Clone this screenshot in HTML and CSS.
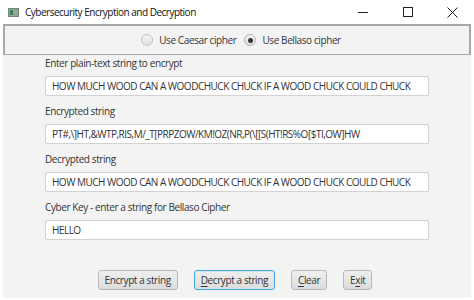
FILE: index.html
```html
<!DOCTYPE html>
<html lang="en">
<head>
    <meta charset="UTF-8">
    <meta name="viewport" content="width=device-width, initial-scale=1.0">
    <title>Cybersecurity Encryption and Decryption</title>
    <link rel="stylesheet" href="styles.css">
</head>
<body>
    <div id="window">
        <div id="titlebar">
            <div class="appicon"><span></span></div>
            <div class="title">Cybersecurity Encryption and Decryption</div>
            <div class="controls">
                <div class="ctl"><span class="min"></span></div>
                <div class="ctl"><span class="max"></span></div>
                <div class="ctl">
                    <svg width="11" height="11" viewBox="0 0 11 11"><path d="M0.5 0.5 L10.5 10.5 M10.5 0.5 L0.5 10.5" stroke="#222" stroke-width="1" fill="none"/></svg>
                </div>
            </div>
        </div>

        <div id="mode">
            <label class="radio"><span class="dot"></span>Use Caesar cipher</label>
            <label class="radio on"><span class="dot"></span>Use Bellaso cipher</label>
        </div>

        <div id="form">
            <div class="group">
                <div class="lbl">Enter plain-text string to encrypt</div>
                <div class="field">HOW MUCH WOOD CAN A WOODCHUCK CHUCK IF A WOOD CHUCK COULD CHUCK</div>
            </div>
            <div class="group">
                <div class="lbl">Encrypted string</div>
                <div class="field">PT#,\]HT,&amp;WTP,RIS,M/_T[PRPZOW/KM!OZ(NR,P(\[[S(HT!RS%O[$TI,OW]HW</div>
            </div>
            <div class="group">
                <div class="lbl">Decrypted string</div>
                <div class="field">HOW MUCH WOOD CAN A WOODCHUCK CHUCK IF A WOOD CHUCK COULD CHUCK</div>
            </div>
            <div class="group">
                <div class="lbl">Cyber Key - enter a string for Bellaso Cipher</div>
                <div class="field">HELLO</div>
            </div>
        </div>

        <div id="buttons">
            <div class="btn">Encrypt a string</div>
            <div class="btn focus"><u>D</u>ecrypt a string</div>
            <div class="btn"><u>C</u>lear</div>
            <div class="btn">E<u>x</u>it</div>
        </div>
    </div>
</body>
</html>
```

FILE: styles.css
```css
* {
    margin: 0;
    padding: 0;
    box-sizing: border-box;
    font-family: "Open Sans", "Noto Sans", sans-serif;
}
html,body {
    width: 100%;
    height: 100%;
    background-color: #fff;
    overflow: hidden;
}
#window {
    width: 474px;
    height: 300px;
    display: flex;
    flex-direction: column;
}
#titlebar {
    height: 24px;
    display: flex;
    align-items: center;
    background-color: #fff;
}
.appicon {
    width: 11px;
    height: 9px;
    margin: 0 6px 0 8px;
    background-color: #8fa79a;
    border: 1px solid #6f8878;
    position: relative;
}
.appicon span {
    position: absolute;
    left: 1px;
    top: 1px;
    width: 3px;
    height: 5px;
    background-color: #3f7d56;
}
.title {
    font-size: 10px;
    letter-spacing: -0.5px;
    color: #111;
}
.controls {
    margin-left: auto;
    display: flex;
    height: 100%;
}
.ctl {
    width: 44px;
    display: flex;
    align-items: center;
    justify-content: center;
}
.ctl:first-child {
    width: 46px;
}
.min {
    width: 10px;
    height: 1px;
    background-color: #222;
}
.max {
    width: 10px;
    height: 10px;
    border: 1px solid #222;
}
#mode {
    height: 31px;
    margin: 0 3px;
    border: 2px solid #a8a8a8;
    border-bottom-width: 1px;
    background-color: #f3f3f3;
    display: flex;
    align-items: center;
    justify-content: center;
    gap: 8px;
    padding-left: 8px;
}
.radio {
    display: flex;
    align-items: center;
    gap: 6px;
    font-size: 10px;
    letter-spacing: -0.4px;
    color: #333;
}
.dot {
    width: 12px;
    height: 12px;
    border-radius: 50%;
    border: 1px solid #c4c4c4;
    background: linear-gradient(#f6f6f6, #dedede);
    display: flex;
    align-items: center;
    justify-content: center;
}
.radio.on .dot {
    border-color: #b0b0b0;
}
.radio.on .dot::after {
    content: "";
    width: 5px;
    height: 5px;
    border-radius: 50%;
    background-color: #333;
}
#form {
    background-color: #f3f3f3;
    padding: 0 0 0 42px;
    margin: 0 3px;
    display: flex;
    flex-direction: column;
    gap: 7px;
}
.lbl {
    height: 16px;
    line-height: 16px;
    font-size: 10px;
    letter-spacing: -0.4px;
    color: #333;
    margin-bottom: 5px;
}
.field {
    width: 384px;
    height: 20px;
    background-color: #fff;
    border: 1px solid #d2d2d2;
    border-radius: 2px;
    font-size: 10px;
    line-height: 18px;
    padding-left: 6px;
    color: #333;
    letter-spacing: -0.5px;
    white-space: nowrap;
    overflow: hidden;
}
#buttons {
    flex: 1;
    background-color: #f3f3f3;
    margin: 0 3px 2px;
    display: flex;
    justify-content: center;
    gap: 16px;
    padding-top: 30px;
    padding-right: 4px;
}
.btn {
    height: 20px;
    padding: 0 6px;
    border: 1px solid #b9b9b9;
    border-radius: 3px;
    background: linear-gradient(#efefef, #dcdcdc);
    font-size: 10px;
    letter-spacing: -0.4px;
    line-height: 18px;
    color: #333;
}
.btn u {
    text-underline-offset: 2px;
}
.btn.focus {
    border-color: #4aa3d8;
    box-shadow: inset 0 0 0 1px #cfe8f6;
}
```
